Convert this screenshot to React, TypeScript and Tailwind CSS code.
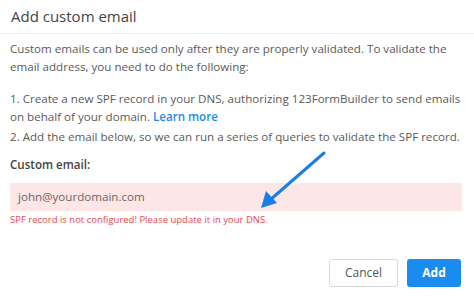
import React from 'react';

export default function App() {
  return (
    <div className="w-[474px] h-[299px] bg-white overflow-hidden relative font-['Open_Sans',sans-serif]">
      <div className="h-[34px] border-b border-[#ececec] pl-[11px] pt-[5px]">
        <h1 className="text-[15px] leading-[22px] text-[#444]">Add custom email</h1>
      </div>
      <div className="px-[10px] pt-[6px] text-[11.6px] leading-[18px] text-[#5a5a5a]">
        <p>
          Custom emails can be used only after they are properly validated. To validate the
          email address, you need to do the following:
        </p>
        <p className="mt-[14px]">
          1. Create a new SPF record in your DNS, authorizing 123FormBuilder to send emails
          on behalf of your domain. <span className="text-[#1a8cf0] font-semibold">Learn more</span>
        </p>
        <p className="mt-[2px]">
          2. Add the email below, so we can run a series of queries to validate the SPF record.
        </p>
        <div className="mt-[10px] font-semibold text-[#444]">Custom email:</div>
        <div className="mt-[9px] h-[28px] w-[452px] bg-[#fde6e6] flex items-center pl-[8px] text-[#666]">
          john@yourdomain.com
        </div>
        <div className="mt-[2px] text-[9.5px] leading-[14px] text-[#e5484d]">
          SPF record is not configured! Please update it in your DNS.
        </div>
      </div>
      <div className="absolute right-[13px] top-[259px] flex gap-[9px]">
        <button className="w-[69px] h-[28px] border border-[#d8d8d8] rounded-[3px] bg-white text-[12px] text-[#555]">
          Cancel
        </button>
        <button className="w-[54px] h-[28px] rounded-[3px] bg-[#1a8cf0] text-[12px] font-bold text-white">
          Add
        </button>
      </div>
      <svg className="absolute left-0 top-0 pointer-events-none" width="474" height="299">
        <line x1="324" y1="153" x2="270" y2="200" stroke="#1a7ee6" strokeWidth="3" strokeLinecap="round" />
        <polygon points="261,208 266,191 277,203" fill="#1a7ee6" />
      </svg>
    </div>
  );
}
